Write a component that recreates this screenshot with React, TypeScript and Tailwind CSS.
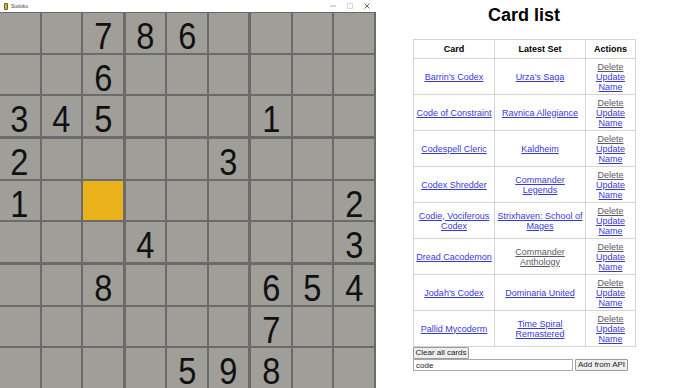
const board = [
  "..786....",
  "..6......",
  "345...1..",
  "2....3...",
  "1.......2",
  "...4....3",
  "..8...654",
  "......7..",
  "....598..",
];

interface Card {
  name: string[];
  set: string[];
  setVisited?: boolean;
}

const cards: Card[] = [
  { name: ["Barrin's Codex"], set: ["Urza's Saga"] },
  { name: ["Code of Constraint"], set: ["Ravnica Allegiance"] },
  { name: ["Codespell Cleric"], set: ["Kaldheim"] },
  { name: ["Codex Shredder"], set: ["Commander", "Legends"] },
  { name: ["Codie, Vociferous", "Codex"], set: ["Strixhaven: School of", "Mages"] },
  { name: ["Dread Cacodemon"], set: ["Commander", "Anthology"], setVisited: true },
  { name: ["Jodah's Codex"], set: ["Dominaria United"] },
  { name: ["Pallid Mycoderm"], set: ["Time Spiral", "Remastered"] },
];

const Lines = ({ lines }: { lines: string[] }) => (
  <>
    {lines.map((l, i) => (
      <span key={i}>
        {i > 0 && <br />}
        {l}
      </span>
    ))}
  </>
);

const TitleBar = () => (
  <div className="h-[12px] bg-white flex items-center relative">
    <div className="ml-[4px] w-[4px] h-[7px] bg-[#d9b23a] border border-[#6b5a20] rounded-[1px]" />
    <span className="ml-[3px] text-[5px] leading-[6px] text-[#444]">Sudoku</span>
    <div className="ml-auto mr-[6px] flex items-center gap-[11px]">
      <svg width="6" height="6" viewBox="0 0 6 6">
        <line x1="0" y1="3" x2="6" y2="3" stroke="#999" strokeWidth="0.8" />
      </svg>
      <svg width="6" height="6" viewBox="0 0 6 6">
        <rect x="0.5" y="0.5" width="5" height="5" fill="none" stroke="#ccc" strokeWidth="0.8" />
      </svg>
      <svg width="6" height="6" viewBox="0 0 6 6">
        <path d="M0.5 0.5 L5.5 5.5 M5.5 0.5 L0.5 5.5" stroke="#555" strokeWidth="0.9" />
      </svg>
    </div>
  </div>
);

const Sudoku = () => (
  <div className="w-[376px] flex flex-col">
    <TitleBar />
    <div className="h-[376px] bg-[#6b6b6b] pt-[1px] pr-[2px] grid grid-cols-3 grid-rows-3 gap-[3px]">
      {Array.from({ length: 9 }).map((_, b) => (
        <div key={b} className="grid grid-cols-3 grid-rows-3 gap-[2px]">
          {Array.from({ length: 9 }).map((_, c) => {
            const r = Math.floor(b / 3) * 3 + Math.floor(c / 3);
            const col = (b % 3) * 3 + (c % 3);
            const v = board[r][col];
            const selected = r === 4 && col === 2;
            return (
              <div
                key={c}
                className={`flex flex-col items-center pt-[9px] ${
                  selected ? "bg-[#e9b21b]" : "bg-[#a09e99]"
                }`}
              >
                {v !== "." && (
                  <span className="text-[37px] leading-[30px] text-[#111] scale-x-[0.88]">{v}</span>
                )}
              </div>
            );
          })}
        </div>
      ))}
    </div>
  </div>
);

const CardList = () => (
  <div className="flex-1 pl-[37px] pt-[5px] text-[9px] leading-[10px] text-black">
    <h1 className="w-[222px] text-center text-[18px] leading-[21px] font-bold">Card list</h1>
    <table className="mt-[13px] w-[222px] table-fixed border-collapse border border-[#d4d4d4]">
      <colgroup>
        <col className="w-[81px]" />
        <col className="w-[91px]" />
        <col className="w-[50px]" />
      </colgroup>
      <thead>
        <tr>
          <th className="border border-[#d4d4d4] py-[4px] px-[1px] font-bold">Card</th>
          <th className="border border-[#d4d4d4] py-[4px] px-[1px] font-bold">Latest Set</th>
          <th className="border border-[#d4d4d4] py-[4px] px-[1px] font-bold">Actions</th>
        </tr>
      </thead>
      <tbody>
        {cards.map((card) => (
          <tr key={card.name.join(" ")}>
            <td className="border border-[#d4d4d4] py-[2.5px] px-[1px] text-center">
              <a href="#" className="underline text-[#3a3ad0]">
                <Lines lines={card.name} />
              </a>
            </td>
            <td className="border border-[#d4d4d4] py-[2.5px] px-[1px] text-center">
              <a
                href="#"
                className={`underline ${card.setVisited ? "text-[#5e5866]" : "text-[#3a3ad0]"}`}
              >
                <Lines lines={card.set} />
              </a>
            </td>
            <td className="border border-[#d4d4d4] py-[2.5px] px-[1px] text-center">
              <a href="#" className="underline text-[#5e5866]">Delete</a>
              <br />
              <a href="#" className="underline text-[#3a3ad0]">
                Update
                <br />
                Name
              </a>
            </td>
          </tr>
        ))}
      </tbody>
    </table>
    <button className="block h-[12px] w-[56px] px-0 bg-[#efefef] border border-[#9a9a9a] rounded-[1px] text-[8px] leading-[10px] text-[#222] whitespace-nowrap">
      Clear all cards
    </button>
    <div className="flex items-center gap-[2px]">
      <input
        defaultValue="code"
        className="h-[12px] w-[160px] border border-[#a9a9a9] px-[2px] text-[8px] leading-[10px] text-[#222] outline-none"
      />
      <button className="h-[12px] w-[53px] px-0 bg-[#efefef] border border-[#9a9a9a] rounded-[1px] text-[8px] leading-[10px] text-[#222] whitespace-nowrap">
        Add from API
      </button>
    </div>
  </div>
);

export default function App() {
  return (
    <div className="flex w-[680px] h-[388px] bg-white overflow-hidden font-['Liberation_Sans',Arial,sans-serif]">
      <Sudoku />
      <CardList />
    </div>
  );
}
